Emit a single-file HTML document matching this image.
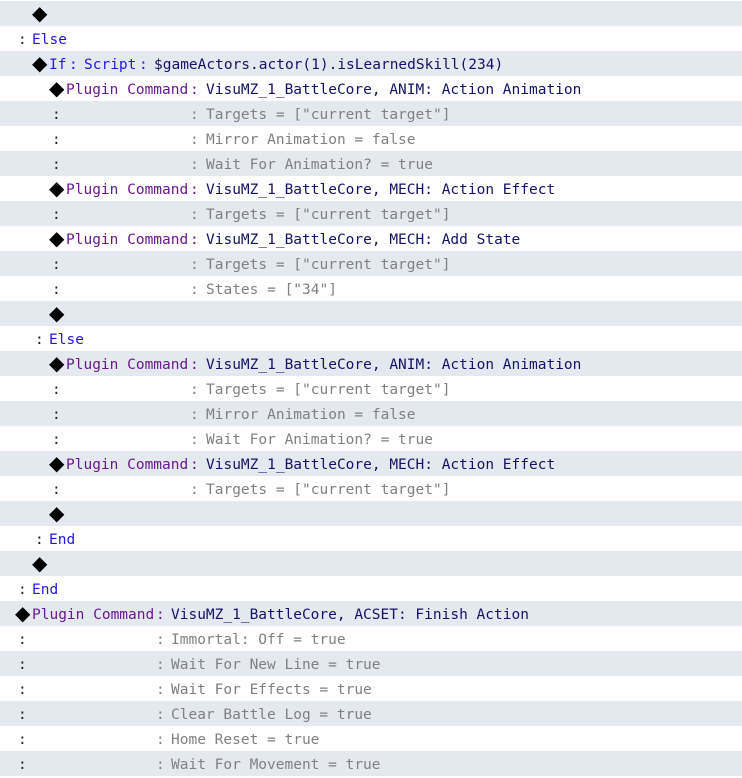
<!DOCTYPE html>
<html><head><meta charset="utf-8"><style>
body{margin:0;width:742px;height:774px;overflow:hidden;background:#fff;position:relative;font-family:"DejaVu Sans Mono","Liberation Mono",monospace;font-size:14.5px}
.r{position:absolute;left:0;width:742px;height:25px;line-height:25px}
.s{background:#e4e9f0}
.r span{position:absolute;top:2px;white-space:pre}
.r span.d{font-family:"DejaVu Sans",sans-serif;font-size:20px;color:#000;top:0px}
.b{color:#2418e0}.p{color:#6a1890}.n{color:#141266}.g{color:#808080}.k{color:#222}
</style></head><body>
<div class="r s" style="top:1px"><span class="d" style="left:32px">◆</span></div>
<div class="r" style="top:26px"><span class="k" style="left:18px">:</span><span class="b" style="left:32px">Else</span></div>
<div class="r s" style="top:51px"><span class="d" style="left:32px">◆</span><span class="b" style="left:49px">If</span><span class="b" style="left:69px">:</span><span class="b" style="left:84px">Script</span><span class="b" style="left:139px">:</span><span class="n" style="left:154px">$gameActors.actor(1).isLearnedSkill(234)</span></div>
<div class="r" style="top:76px"><span class="d" style="left:49px">◆</span><span class="p" style="left:66px">Plugin Command</span><span class="p" style="left:190px">:</span><span class="n" style="left:206px">VisuMZ_1_BattleCore, ANIM: Action Animation</span></div>
<div class="r s" style="top:101px"><span class="k" style="left:52px">:</span><span class="g" style="left:190px">:</span><span class="g" style="left:206px">Targets = ["current target"]</span></div>
<div class="r" style="top:126px"><span class="k" style="left:52px">:</span><span class="g" style="left:190px">:</span><span class="g" style="left:206px">Mirror Animation = false</span></div>
<div class="r s" style="top:151px"><span class="k" style="left:52px">:</span><span class="g" style="left:190px">:</span><span class="g" style="left:206px">Wait For Animation? = true</span></div>
<div class="r" style="top:176px"><span class="d" style="left:49px">◆</span><span class="p" style="left:66px">Plugin Command</span><span class="p" style="left:190px">:</span><span class="n" style="left:206px">VisuMZ_1_BattleCore, MECH: Action Effect</span></div>
<div class="r s" style="top:201px"><span class="k" style="left:52px">:</span><span class="g" style="left:190px">:</span><span class="g" style="left:206px">Targets = ["current target"]</span></div>
<div class="r" style="top:226px"><span class="d" style="left:49px">◆</span><span class="p" style="left:66px">Plugin Command</span><span class="p" style="left:190px">:</span><span class="n" style="left:206px">VisuMZ_1_BattleCore, MECH: Add State</span></div>
<div class="r s" style="top:251px"><span class="k" style="left:52px">:</span><span class="g" style="left:190px">:</span><span class="g" style="left:206px">Targets = ["current target"]</span></div>
<div class="r" style="top:276px"><span class="k" style="left:52px">:</span><span class="g" style="left:190px">:</span><span class="g" style="left:206px">States = ["34"]</span></div>
<div class="r s" style="top:301px"><span class="d" style="left:49px">◆</span></div>
<div class="r" style="top:326px"><span class="k" style="left:35px">:</span><span class="b" style="left:49px">Else</span></div>
<div class="r s" style="top:351px"><span class="d" style="left:49px">◆</span><span class="p" style="left:66px">Plugin Command</span><span class="p" style="left:190px">:</span><span class="n" style="left:206px">VisuMZ_1_BattleCore, ANIM: Action Animation</span></div>
<div class="r" style="top:376px"><span class="k" style="left:52px">:</span><span class="g" style="left:190px">:</span><span class="g" style="left:206px">Targets = ["current target"]</span></div>
<div class="r s" style="top:401px"><span class="k" style="left:52px">:</span><span class="g" style="left:190px">:</span><span class="g" style="left:206px">Mirror Animation = false</span></div>
<div class="r" style="top:426px"><span class="k" style="left:52px">:</span><span class="g" style="left:190px">:</span><span class="g" style="left:206px">Wait For Animation? = true</span></div>
<div class="r s" style="top:451px"><span class="d" style="left:49px">◆</span><span class="p" style="left:66px">Plugin Command</span><span class="p" style="left:190px">:</span><span class="n" style="left:206px">VisuMZ_1_BattleCore, MECH: Action Effect</span></div>
<div class="r" style="top:476px"><span class="k" style="left:52px">:</span><span class="g" style="left:190px">:</span><span class="g" style="left:206px">Targets = ["current target"]</span></div>
<div class="r s" style="top:501px"><span class="d" style="left:49px">◆</span></div>
<div class="r" style="top:526px"><span class="k" style="left:35px">:</span><span class="b" style="left:49px">End</span></div>
<div class="r s" style="top:551px"><span class="d" style="left:32px">◆</span></div>
<div class="r" style="top:576px"><span class="k" style="left:18px">:</span><span class="b" style="left:32px">End</span></div>
<div class="r s" style="top:601px"><span class="d" style="left:15px">◆</span><span class="p" style="left:32px">Plugin Command</span><span class="p" style="left:156px">:</span><span class="n" style="left:171px">VisuMZ_1_BattleCore, ACSET: Finish Action</span></div>
<div class="r" style="top:626px"><span class="k" style="left:18px">:</span><span class="g" style="left:156px">:</span><span class="g" style="left:171px">Immortal: Off = true</span></div>
<div class="r s" style="top:651px"><span class="k" style="left:18px">:</span><span class="g" style="left:156px">:</span><span class="g" style="left:171px">Wait For New Line = true</span></div>
<div class="r" style="top:676px"><span class="k" style="left:18px">:</span><span class="g" style="left:156px">:</span><span class="g" style="left:171px">Wait For Effects = true</span></div>
<div class="r s" style="top:701px"><span class="k" style="left:18px">:</span><span class="g" style="left:156px">:</span><span class="g" style="left:171px">Clear Battle Log = true</span></div>
<div class="r" style="top:726px"><span class="k" style="left:18px">:</span><span class="g" style="left:156px">:</span><span class="g" style="left:171px">Home Reset = true</span></div>
<div class="r s" style="top:751px"><span class="k" style="left:18px">:</span><span class="g" style="left:156px">:</span><span class="g" style="left:171px">Wait For Movement = true</span></div>
</body></html>
